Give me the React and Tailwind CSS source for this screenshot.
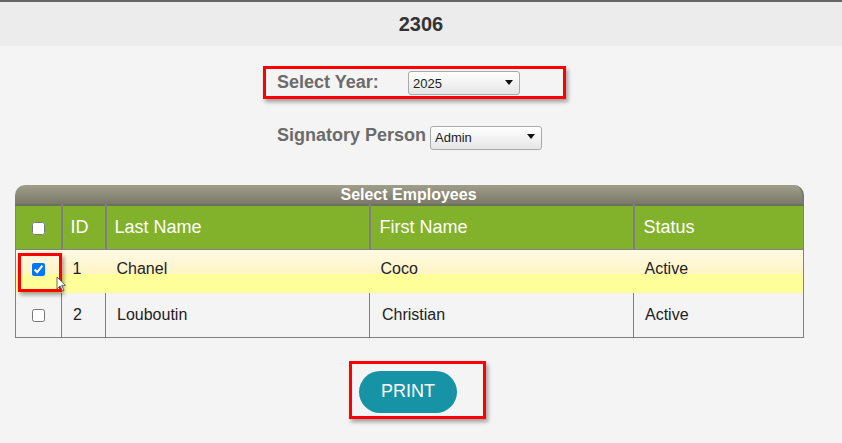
import React from 'react';

// fake select box: native select with custom arrow on top
const FakeSelect = ({ value, options }) => (
  <div className="relative w-[112px] h-[24px]">
    <select
      defaultValue={value}
      className="appearance-none w-full h-full rounded-[3px] border border-[#a9a9a9] bg-gradient-to-b from-[#ffffff] to-[#e6e6e6] pl-[4px] text-[13px] text-[#222] outline-none"
    >
      {options.map((o) => (
        <option key={o}>{o}</option>
      ))}
    </select>
    <span className="pointer-events-none absolute right-[7px] top-[9px] w-0 h-0 border-l-[4px] border-r-[4px] border-t-[5px] border-l-transparent border-r-transparent border-t-[#111]"></span>
  </div>
);

const employees = [
  { id: 1, last: 'Chanel', first: 'Coco', status: 'Active', checked: true },
  { id: 2, last: 'Louboutin', first: 'Christian', status: 'Active', checked: false },
];

const App = () => {
  return (
    <div className="min-h-[443px] bg-[#f4f4f4] font-['Liberation_Sans',Arial,sans-serif]">
      {/* top title bar */}
      <div className="h-[46px] border-t-2 border-[#666] bg-[#ececec] flex items-center justify-center">
        <h1 className="text-[20px] font-bold text-[#333]">2306</h1>
      </div>

      {/* filters */}
      <div className="flex justify-center pr-[13px] pt-[20px]">
        <div className="w-[303px]">
          <div className="flex items-center h-[33px] border-[3px] border-[#ff0000] shadow-[2px_3px_4px_rgba(0,0,0,0.35)] pl-[11px]">
            <span className="w-[131px] text-[18px] font-bold text-[#6b6b6b]">Select Year:</span>
            <FakeSelect value="2025" options={['2025', '2024', '2023']} />
          </div>
          <div className="flex items-center pl-[14px] mt-[26px]">
            <span className="w-[153px] text-[18px] font-bold text-[#6b6b6b] -mt-[4px]">Signatory Person</span>
            <FakeSelect value="Admin" options={['Admin']} />
          </div>
        </div>
      </div>

      {/* employees table */}
      <div className="ml-[15px] w-[789px] mt-[36px]">
        <div className="h-[19px] rounded-t-[10px] bg-gradient-to-b from-[#a09e8b] to-[#7a7968] border-r-2 border-[#777] flex items-center justify-center">
          <span className="text-[16px] leading-none font-bold text-white">Select Employees</span>
        </div>
        <table className="w-full table-fixed border-collapse border-x border-b border-[#808080]">
          <colgroup>
            <col className="w-[46px]" />
            <col className="w-[44px]" />
            <col className="w-[264px]" />
            <col className="w-[264px]" />
            <col />
          </colgroup>
          <thead>
            <tr className="h-[44px] bg-[#82b22b] text-white text-[18px] text-left border-t-2 border-[#6f6f60] border-b border-b-[#808080]">
              <th className="font-normal text-center border-r-2 border-[#808080]">
                <input type="checkbox" className="w-[13px] h-[13px] align-middle" />
              </th>
              <th className="font-normal pl-[8px] border-r-2 border-[#808080]">ID</th>
              <th className="font-normal pl-[8px] border-r-2 border-[#808080]">Last Name</th>
              <th className="font-normal pl-[9px] border-r-2 border-[#808080]">First Name</th>
              <th className="font-normal pl-[9px]">Status</th>
            </tr>
          </thead>
          <tbody className="text-[16px] text-[#222]">
            {employees.map((e) =>
              e.checked ? (
                <tr
                  key={e.id}
                  className="h-[44px] border-t border-[#f2b33d] bg-[linear-gradient(to_bottom,#fffae6_0%,#fff4c4_55%,#ffff99_55%,#ffff99_100%)]"
                >
                  <td className="relative text-center">
                    <input type="checkbox" defaultChecked className="w-[13px] h-[13px] align-middle relative -top-[3px]" />
                    <div className="absolute left-[2px] top-[3px] w-[44px] h-[39px] border-[3px] border-[#ff0000] shadow-[2px_3px_4px_rgba(0,0,0,0.35)]"></div>
                    <svg className="absolute left-[40px] top-[26px]" width="10" height="16" viewBox="0 0 10 16">
                      <path d="M1 1 L1 13 L4 10 L6.5 15 L8 14.3 L5.6 9.4 L9.5 9.4 Z" fill="#fff" stroke="#555" strokeWidth="0.9" />
                    </svg>
                  </td>
                  <td className="pl-[11px] pb-[4px]">{e.id}</td>
                  <td className="pl-[11px] pb-[4px]">{e.last}</td>
                  <td className="pl-[11px] pb-[4px]">{e.first}</td>
                  <td className="pl-[11px] pb-[4px]">{e.status}</td>
                </tr>
              ) : (
                <tr key={e.id} className="h-[44px] bg-[#f4f4f4]">
                  <td className="text-center border-r border-[#808080]">
                    <input type="checkbox" className="w-[13px] h-[13px] align-middle" />
                  </td>
                  <td className="pl-[11px] border-r border-[#808080]">{e.id}</td>
                  <td className="pl-[11px] border-r border-[#808080]">{e.last}</td>
                  <td className="pl-[12px] border-r border-[#808080]">{e.first}</td>
                  <td className="pl-[11px]">{e.status}</td>
                </tr>
              )
            )}
          </tbody>
        </table>
      </div>

      {/* print */}
      <div className="flex justify-center pr-[7px] mt-[23px]">
        <div className="w-[137px] h-[58px] border-[3px] border-[#ff0000] shadow-[2px_3px_4px_rgba(0,0,0,0.35)] pl-[7px] pt-[7px]">
          <button className="w-[98px] h-[42px] rounded-full bg-[#1793a6] text-white text-[18px]">
            PRINT
          </button>
        </div>
      </div>
    </div>
  );
};

export default App;
